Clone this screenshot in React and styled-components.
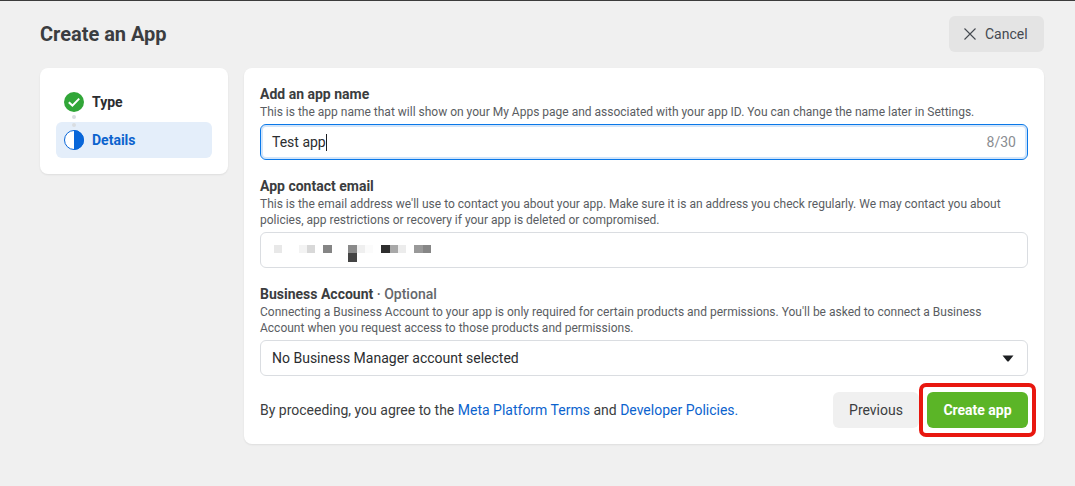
import React from 'react';
import styled, { createGlobalStyle } from 'styled-components';

const GlobalStyle = createGlobalStyle`
  html, body {
    margin: 0;
    padding: 0;
    background: #f0f0f0;
    font-family: Roboto, "Liberation Sans", sans-serif;
  }
`;

const PIXELS = [
  [24, 0, 8, '#e8e8e8'],
  [49, 0, 8, '#f3f3f3'],
  [57, 0, 8, '#d8d8d8'],
  [73, 0, 9, '#858585'],
  [98, 0, 9, '#8a8a8a'],
  [107, 0, 8, '#efefef'],
  [115, 0, 8, '#fbfbfb'],
  [131, 0, 9, '#2e2e2e'],
  [140, 0, 8, '#a8a8a8'],
  [148, 0, 8, '#ececec'],
  [164, 0, 9, '#999999'],
  [173, 0, 8, '#868686'],
  [98, 8, 9, '#444444'],
];

const App = () => {
  return (
    <Page>
      <GlobalStyle />
      <Header>
        <Title>Create an App</Title>
        <CancelButton>
          <svg width="14" height="14" viewBox="0 0 14 14" fill="none">
            <path d="M1.5 1.5l11 11M12.5 1.5l-11 11" stroke="#444950" strokeWidth="1.1" />
          </svg>
          Cancel
        </CancelButton>
      </Header>

      <Columns>
        <Sidebar>
          <StepRow>
            <svg width="20" height="20" viewBox="0 0 20 20">
              <circle cx="10" cy="10" r="10" fill="#31a638" />
              <path d="M4.8 10.2l3.6 3.4 6.8-7" fill="none" stroke="#fff" strokeWidth="2" />
            </svg>
            <StepLabel>Type</StepLabel>
          </StepRow>
          <StepRow $active>
            <StepDots>
              <Dot />
              <Dot />
            </StepDots>
            <svg width="20" height="20" viewBox="0 0 20 20">
              <circle cx="10" cy="10" r="9.5" fill="#fff" stroke="#0866d9" />
              <path d="M10 0a10 10 0 0 1 0 20z" fill="#0866d9" />
            </svg>
            <StepLabel $active>Details</StepLabel>
          </StepRow>
        </Sidebar>

        <Card>
          <Field>
            <Label>Add an app name</Label>
            <Help>
              This is the app name that will show on your My Apps page and associated with your app ID. You can change the name later in Settings.
            </Help>
            <Input $focused>
              <InputText>
                Test app
                <Caret />
              </InputText>
              <Counter>8/30</Counter>
            </Input>
          </Field>

          <Field>
            <Label>App contact email</Label>
            <Help>
              This is the email address we'll use to contact you about your app. Make sure it is an address you check regularly. We may contact you about policies, app restrictions or recovery if your app is deleted or compromised.
            </Help>
            <Input>
              <PixelBlur width="240" height="34" viewBox="11 -12 240 34">
                {PIXELS.map(([x, y, w, color]) => (
                  <rect key={`${x}-${y}`} x={x} y={y} width={w} height={y ? 9 : 8} fill={color} />
                ))}
              </PixelBlur>
            </Input>
          </Field>

          <Field>
            <Label>
              Business Account <Optional>· Optional</Optional>
            </Label>
            <Help>
              Connecting a Business Account to your app is only required for certain products and permissions. You'll be asked to connect a Business Account when you request access to those products and permissions.
            </Help>
            <Input>
              <InputText>No Business Manager account selected</InputText>
              <Arrow width="12" height="7" viewBox="0 0 12 7">
                <path d="M0.5 0.5h11L7 6a1.4 1.4 0 0 1-2 0z" fill="#1c1e21" />
              </Arrow>
            </Input>
          </Field>

          <Footer>
            <Terms>
              By proceeding, you agree to the <TermsLink>Meta Platform Terms</TermsLink> and{' '}
              <TermsLink>Developer Policies.</TermsLink>
            </Terms>
            <Actions>
              <PreviousButton>Previous</PreviousButton>
              <CreateButton>Create app</CreateButton>
            </Actions>
          </Footer>
        </Card>
      </Columns>
    </Page>
  );
};
export default App;

const Page = styled.div`
  box-sizing: border-box;
  width: 1075px;
  height: 486px;
  padding: 15px 31px 0 40px;
  border-top: 1px solid #3c3c3c;
  background: #f0f0f0;
  overflow: hidden;
`;

const Header = styled.div`
  display: flex;
  align-items: center;
  justify-content: space-between;
  height: 36px;
  margin-bottom: 16px;
`;

const Title = styled.h1`
  margin: 0;
  color: #3b3d40;
  font-size: 20px;
  font-weight: 700;
  letter-spacing: -0.02px;
`;

const CancelButton = styled.button`
  display: flex;
  align-items: center;
  gap: 8px;
  box-sizing: border-box;
  width: 95px;
  height: 36px;
  padding: 0 0 0 14px;
  border: 0;
  border-radius: 6px;
  background: #e4e4e4;
  color: #444950;
  font-family: inherit;
  font-size: 14px;
`;

const Columns = styled.div`
  display: flex;
  align-items: flex-start;
  gap: 16px;
`;

const Sidebar = styled.div`
  display: flex;
  flex-direction: column;
  gap: 2px;
  box-sizing: border-box;
  width: 188px;
  height: 106px;
  padding: 16px;
  border-radius: 8px;
  background: #fff;
  box-shadow: 0 1px 2px rgba(0, 0, 0, 0.08);
`;

const StepRow = styled.div`
  position: relative;
  display: flex;
  align-items: center;
  gap: 8px;
  height: 36px;
  padding: 0 8px;
  border-radius: 6px;
  background: ${(p) => (p.$active ? '#e4eefa' : 'transparent')};
`;

const StepLabel = styled.span`
  color: ${(p) => (p.$active ? '#0b63ce' : '#2b2d30')};
  font-size: 14px;
  font-weight: 700;
`;

const StepDots = styled.div`
  position: absolute;
  top: -7px;
  left: 16px;
  display: flex;
  flex-direction: column;
  gap: 4px;
`;

const Dot = styled.span`
  width: 4px;
  height: 4px;
  border-radius: 50%;
  background: #dadde1;
`;

const Card = styled.div`
  display: flex;
  flex-direction: column;
  box-sizing: border-box;
  width: 800px;
  height: 376px;
  padding: 16px 16px 0;
  border-radius: 8px;
  background: #fff;
  box-shadow: 0 1px 2px rgba(0, 0, 0, 0.08);
`;

const Field = styled.div`
  display: flex;
  flex-direction: column;
  margin-bottom: 16px;
`;

const Label = styled.div`
  color: #3b3d40;
  font-size: 14px;
  font-weight: 700;
  line-height: 20px;
`;

const Optional = styled.span`
  color: #65676b;
  font-weight: 500;
`;

const Help = styled.div`
  margin-bottom: 4px;
  color: #5a5d62;
  font-size: 12px;
  line-height: 16px;
`;

const Input = styled.div`
  display: flex;
  align-items: center;
  justify-content: space-between;
  box-sizing: border-box;
  height: 36px;
  padding: 0 12px 0 11px;
  border: 1px solid ${(p) => (p.$focused ? '#0a78e8' : '#dadde1')};
  border-radius: 6px;
  background: #fff;
  box-shadow: ${(p) => (p.$focused ? 'inset 0 0 0 2px #d2e5fa' : 'none')};
`;

const InputText = styled.span`
  display: flex;
  align-items: center;
  color: #2b2d30;
  font-size: 14px;
`;

const Caret = styled.span`
  width: 1px;
  height: 17px;
  background: #1c1e21;
`;

const Counter = styled.span`
  margin-right: -1px;
  color: #8a8d91;
  font-size: 14px;
`;

const Arrow = styled.svg`
  margin-right: 1px;
`;

const PixelBlur = styled.svg`
  display: block;
  margin-left: -11px;
`;

const Footer = styled.div`
  display: flex;
  align-items: center;
  justify-content: space-between;
`;

const Terms = styled.div`
  color: #3b3d40;
  font-size: 14px;
`;

const TermsLink = styled.a`
  color: #0b63ce;
`;

const Actions = styled.div`
  display: flex;
  gap: 8px;
`;

const PreviousButton = styled.button`
  width: 86px;
  height: 36px;
  border: 0;
  border-radius: 6px;
  background: #f0f0f0;
  color: #3b3d40;
  font-family: inherit;
  font-size: 14px;
`;

const CreateButton = styled.button`
  position: relative;
  width: 101px;
  height: 36px;
  border: 0;
  border-radius: 6px;
  background: #5bb527;
  color: #fff;
  font-family: inherit;
  font-size: 14px;
  font-weight: 700;

  &::after {
    content: '';
    position: absolute;
    inset: -9px -8px;
    border: 4px solid #e8170f;
    border-radius: 7px;
  }
`;
